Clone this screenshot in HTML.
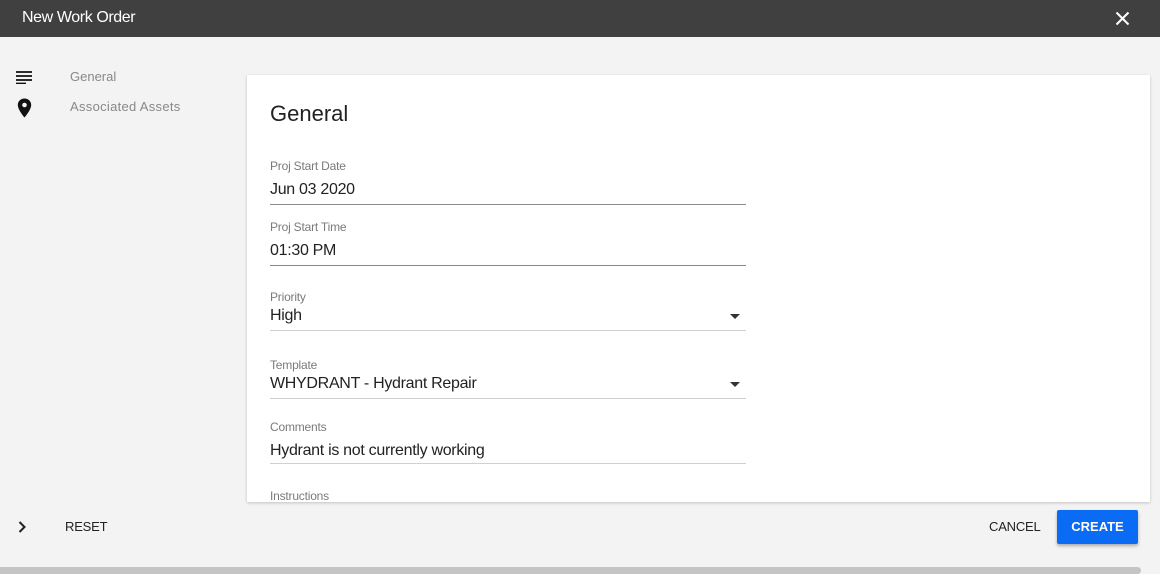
<!DOCTYPE html>
<html><head><style>
*{margin:0;padding:0;box-sizing:border-box}
body{width:1160px;height:574px;background:#f3f3f3;font-family:"Liberation Sans",Arial,sans-serif;position:relative;overflow:hidden}
.a{position:absolute;white-space:nowrap}
.hdr{left:0;top:0;width:1160px;height:37px;background:#404040}
.lbl{font-size:12px;color:#7a7a7a;letter-spacing:-0.2px}
.val{font-size:16px;color:#222;letter-spacing:-0.3px}
.ln{height:1px;background:#8a8a8a;left:270px;width:476px}
.ln2{height:1px;background:#d0d0d0;left:270px;width:476px}
.tri{width:0;height:0;border-left:5px solid transparent;border-right:5px solid transparent;border-top:5px solid #333}
</style></head><body>
<div class="a hdr"></div>
<div class="a" style="left:22px;top:9px;font-size:16px;color:#fff;letter-spacing:-0.4px">New Work Order</div>
<svg class="a" style="left:1115px;top:11px" width="15" height="15" viewBox="0 0 15 15"><path d="M1.5 1.5L13.5 13.5M13.5 1.5L1.5 13.5" stroke="#fff" stroke-width="2"/></svg>

<svg class="a" style="left:15px;top:70px" width="18" height="14" viewBox="0 0 18 14"><path d="M1 2h16M1 6h16M1 10h16M1 13.5h10" stroke="#111" stroke-width="1.8"/></svg>
<div class="a" style="left:70px;top:69px;font-size:13px;color:#888">General</div>
<svg class="a" style="left:17px;top:98px" width="15" height="20" viewBox="0 0 15 20"><path d="M7.5 0.5C3.6 0.5 0.8 3.4 0.8 7c0 4.8 6.7 12.5 6.7 12.5S14.2 11.8 14.2 7C14.2 3.4 11.4 0.5 7.5 0.5zM7.5 9.3a2.3 2.3 0 1 1 0-4.6a2.3 2.3 0 0 1 0 4.6z" fill="#111"/></svg>
<div class="a" style="left:70px;top:99px;font-size:13px;color:#888;letter-spacing:0.3px">Associated Assets</div>

<div class="a" style="left:247px;top:75px;width:903px;height:427px;background:#fff;box-shadow:0 1px 3px rgba(0,0,0,.2)"></div>
<div class="a" style="left:270px;top:101px;font-size:22px;color:#222">General</div>

<div class="a lbl" style="left:270px;top:159px">Proj Start Date</div>
<div class="a val" style="left:270px;top:181px">Jun 03 2020</div>
<div class="a ln" style="top:204px"></div>

<div class="a lbl" style="left:270px;top:220px">Proj Start Time</div>
<div class="a val" style="left:270px;top:242px">01:30 PM</div>
<div class="a ln" style="top:265px"></div>

<div class="a lbl" style="left:270px;top:290px">Priority</div>
<div class="a val" style="left:270px;top:307px">High</div>
<div class="a tri" style="left:730px;top:314px"></div>
<div class="a ln2" style="top:330px"></div>

<div class="a lbl" style="left:270px;top:358px">Template</div>
<div class="a val" style="left:270px;top:375px">WHYDRANT - Hydrant Repair</div>
<div class="a tri" style="left:730px;top:382px"></div>
<div class="a ln2" style="top:398px"></div>

<div class="a lbl" style="left:270px;top:420px">Comments</div>
<div class="a val" style="left:270px;top:442px">Hydrant is not currently working</div>
<div class="a ln2" style="top:463px"></div>

<div class="a lbl" style="left:270px;top:489px">Instructions</div>

<svg class="a" style="left:17px;top:520px" width="10" height="14" viewBox="0 0 10 14"><path d="M2.5 2l5 5-5 5" stroke="#222" stroke-width="2" fill="none"/></svg>
<div class="a" style="left:65px;top:519px;font-size:13px;color:#222;letter-spacing:-0.2px">RESET</div>
<div class="a" style="left:989px;top:519px;font-size:13px;color:#222;letter-spacing:-0.2px">CANCEL</div>
<div class="a" style="left:1057px;top:510px;width:81px;height:34px;background:#0a6cf5;border-radius:2px;box-shadow:0 2px 3px rgba(0,0,0,.3);color:#fff;font-size:13px;font-weight:bold;text-align:center;line-height:34px">CREATE</div>

<div class="a" style="left:0;top:567px;width:1141px;height:7px;background:#c4c4c4;border-radius:0 4px 4px 0"></div>
</body></html>
